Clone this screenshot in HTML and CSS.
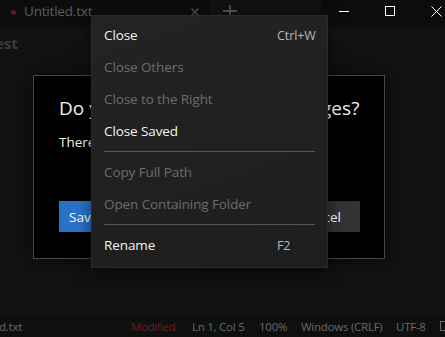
FILE: index.html
```html
<!DOCTYPE html>
<html>
<head>
<meta charset="utf-8">
<link rel="stylesheet" href="styles.css">
</head>
<body>
<div class="window">
  <div class="titlebar">
    <div class="tab">
      <span class="dot"></span>
      <span class="tab-title">Untitled.txt</span>
      <svg class="tab-close" width="8" height="8" viewBox="0 0 8 8"><path d="M0.5 0.5L7.5 7.5M7.5 0.5L0.5 7.5" stroke="#555" stroke-width="1.1"/></svg>
    </div>
    <svg class="plus" width="14" height="12" viewBox="0 0 14 12"><path d="M7 0V12M0 6H14" stroke="#666" stroke-width="1.3"/></svg>
    <div class="spacer"></div>
    <div class="controls">
      <div class="ctl"><svg width="10" height="10" viewBox="0 0 10 10"><path d="M0 5.5H10" stroke="#fff" stroke-width="1"/></svg></div>
      <div class="ctl"><svg width="10" height="10" viewBox="0 0 10 10"><rect x="0.5" y="0.5" width="9" height="9" fill="none" stroke="#fff" stroke-width="1"/></svg></div>
      <div class="ctl"><svg width="11" height="11" viewBox="0 0 11 11"><path d="M0.5 0.5L10.5 10.5M10.5 0.5L0.5 10.5" stroke="#fff" stroke-width="1"/></svg></div>
    </div>
  </div>
  <div class="content">
    <div class="editor-text">est</div>
    <div class="dialog">
      <div class="dlg-title">Do you want to save the changes?</div>
      <div class="dlg-body">There are unsaved changes in Untitled.txt.</div>
      <div class="dlg-buttons">
        <div class="btn primary">Save</div>
        <div class="btn">Don't Save</div>
        <div class="btn cancel">Cancel</div>
      </div>
    </div>
  </div>
  <div class="statusbar">
    <span class="st st-file">d.txt</span>
    <span class="st st-mod">Modified</span>
    <span class="st st-ln">Ln 1, Col 5</span>
    <span class="st st-zoom">100%</span>
    <span class="st st-eol">Windows (CRLF)</span>
    <span class="st st-enc">UTF-8</span>
    <span class="st-icon"></span>
  </div>
  <div class="menu">
    <div class="item"><span>Close</span><span class="key">Ctrl+W</span></div>
    <div class="item disabled"><span>Close Others</span><span></span></div>
    <div class="item disabled"><span>Close to the Right</span><span></span></div>
    <div class="item"><span>Close Saved</span><span></span></div>
    <div class="sep"></div>
    <div class="item disabled"><span>Copy Full Path</span><span></span></div>
    <div class="item disabled"><span>Open Containing Folder</span><span></span></div>
    <div class="sep"></div>
    <div class="item"><span>Rename</span><span class="key">F2</span></div>
  </div>
</div>
</body>
</html>
```
FILE: styles.css
```css
* { box-sizing: border-box; }
html, body { margin: 0; padding: 0; }
body {
  width: 445px;
  height: 337px;
  overflow: hidden;
  background: #121212;
  font-family: "Open Sans", "Noto Sans", sans-serif;
}
.window {
  position: relative;
  width: 445px;
  height: 337px;
  display: flex;
  flex-direction: column;
  background: #121212;
  overflow: hidden;
}
.titlebar {
  height: 27px;
  flex: none;
  display: flex;
  align-items: flex-start;
  background: #111111;
}
.tab {
  width: 210px;
  flex: none;
  height: 27px;
  background: #0c0c0c;
  display: flex;
  align-items: flex-start;
  padding-left: 11px;
}
.dot {
  width: 5px;
  height: 5px;
  border-radius: 50%;
  background: #5e1b1f;
  margin-top: 10px;
}
.tab-title {
  margin-left: 8px;
  font-size: 13.5px;
  line-height: 22px;
  color: #5e5e5e;
  letter-spacing: -0.2px;
}
.tab-close {
  margin-left: 99px;
  margin-top: 8px;
}
.plus {
  margin-left: 13px;
  margin-top: 5px;
}
.spacer { flex: 1; }
.controls {
  display: flex;
  flex: none;
  height: 27px;
  background: #0c0c0c;
  margin-right: -14px;
}
.ctl {
  width: 46px;
  height: 27px;
  display: flex;
  justify-content: center;
  padding-top: 6px;
}
.content {
  flex: 1;
  position: relative;
  background: #121212;
}
.editor-text {
  margin-left: -5px;
  margin-top: 6px;
  font-size: 15px;
  font-weight: 700;
  color: #3c3c3c;
  line-height: 20px;
}
.dialog {
  position: absolute;
  left: 33px;
  top: 48px;
  width: 352px;
  height: 184px;
  background: #000;
  border: 1px solid #474747;
  padding: 18px 24px 0 25px;
  display: flex;
  flex-direction: column;
  box-shadow: 0 0 20px rgba(0,0,0,0.6);
}
.dlg-title {
  font-size: 19px;
  color: #f2f2f2;
  line-height: 28px;
  white-space: nowrap;
  letter-spacing: 0.03px;
}
.dlg-body {
  margin-top: 10px;
  font-size: 13.5px;
  color: #f2f2f2;
  line-height: 20px;
  white-space: nowrap;
}
.dlg-buttons {
  margin-top: 49px;
  display: flex;
  gap: 8px;
}
.btn {
  height: 31px;
  padding: 0 10px;
  display: flex;
  align-items: center;
  justify-content: center;
  font-size: 13.5px;
  color: #fff;
  background: #333;
  flex: 1;
  white-space: nowrap;
}
.btn.primary { background: #2a72c8; justify-content: flex-start; }
.btn.cancel { flex: none; width: 80px; }
.statusbar {
  height: 22px;
  flex: none;
  background: #0f0f0f;
  display: flex;
  align-items: center;
  font-size: 11.5px;
  letter-spacing: -0.25px;
  color: #6a6a6a;
  white-space: nowrap;
}
.st { flex: none; overflow: hidden; }
.st-file { margin-left: -1px; width: 132px; }
.st-mod { color: #6a1c24; width: 61px; letter-spacing: -0.4px; }
.st-ln { width: 67px; }
.st-zoom { width: 42px; }
.st-eol { width: 95px; }
.st-enc { width: 44px; }
.st-icon {
  flex: none;
  width: 8px;
  height: 10px;
  border: 1px solid #6a6a6a;
  border-right: none;
}
.menu {
  position: absolute;
  left: 91px;
  top: 15px;
  width: 237px;
  padding: 3px 0 6px;
  background: linear-gradient(160deg, #232323, #1e1e1e);
  border: 1px solid #2a2a2a;
  box-shadow: 0 4px 14px rgba(0,0,0,0.55);
  font-size: 13.5px;
  letter-spacing: -0.1px;
}
.item {
  height: 32px;
  display: grid;
  grid-template-columns: 173px 1fr;
  align-items: center;
  padding-left: 12px;
  color: #f3f3f3;
}
.item.disabled { color: #6c6c6c; }
.item .key { color: #b8b8b8; font-size: 12.5px; }
.sep {
  height: 1px;
  margin: 4px 12px 4px 12px;
  background: #575757;
}
```
